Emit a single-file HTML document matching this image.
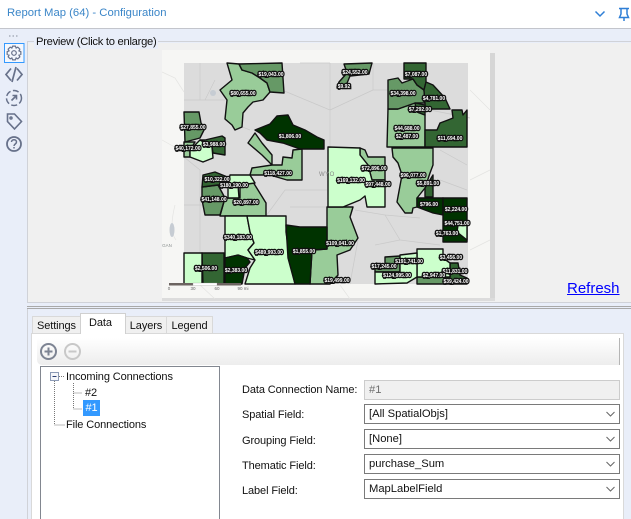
<!DOCTYPE html>
<html style="width:631px;height:519px;overflow:hidden"><head><meta charset="utf-8">
<style>
html,body{margin:0;padding:0}
body{width:631px;height:519px;overflow:hidden;position:relative;background:#e9eef9;font-family:"Liberation Sans",sans-serif;font-size:11px;color:#111}
.a{position:absolute;white-space:nowrap}
.lab{line-height:14px;letter-spacing:-.1px}
.inp{position:absolute;left:364px;width:254px;height:18px;border:1px solid #7a7a7a;background:#fff;line-height:17px;font-size:11.200px}
.inp span{position:absolute;left:4px;top:1px}
.inp svg{position:absolute;right:4px;top:6px}
.tab{position:absolute;top:316px;height:17px;background:#f0f0f0;border:1px solid #d9d9d9;border-bottom:none;box-sizing:border-box;line-height:18px;text-align:center;letter-spacing:-.1px}
</style></head><body>
<div class="a" style="left:0;top:0;width:631px;height:28px;background:#fff;border-bottom:1px solid #c3c5cc"></div>
<div class="a" style="left:7px;top:6px;font-size:11.300px;color:#3b86c8;line-height:15px">Report Map (64) - Configuration</div>
<svg class="a" style="left:590px;top:4px" width="41" height="20" fill="none" stroke="#2f7fd6" stroke-width="1.5"><path d="M5.500 7.500L10 12L14.500 7.500"/><path d="M29 4.500H39M31 5V10L29.500 13.500H38.500L37 10V5M34 13.500V17"/></svg>

<!-- sidebar -->
<svg class="a" style="left:0;top:29px" width="28" height="130" fill="none" stroke="#67718a" stroke-width="1.5">
<path d="M9 7h1.500M12.500 7h1.500M16 7h1.500" stroke="#a8aebb" stroke-width="1.500"/>
<rect x="4.500" y="14.500" width="19.500" height="19" stroke="#3399ff" stroke-width="1" fill="#f4f7fd"/>
<circle cx="14" cy="24" r="2.300" stroke-width="1.200"/>
<path d="M12.540 17.150L15.460 17.150L16.070 19.120L17.810 18.130L19.870 20.190L18.880 21.930L20.850 22.540L20.850 25.460L18.880 26.070L19.870 27.810L17.810 29.870L16.070 28.880L15.460 30.850L12.540 30.850L11.930 28.880L10.190 29.870L8.130 27.810L9.120 26.070L7.150 25.460L7.150 22.540L9.120 21.930L8.130 20.190L10.190 18.130L11.930 19.120Z" stroke-width="1.200" stroke-linejoin="round"/>
<path d="M11 39.500L6 45.500L11 51.500M17 39.500L22 45.500L17 51.500M16 38L12 53" stroke-width="1.700"/>
<circle cx="14" cy="69" r="7.500" stroke-dasharray="6 2.500" stroke-width="1.500"/>
<path d="M11.500 71.500L16.500 66.500M12.500 66.500H16.500V70.500" stroke-width="1.600"/>
<path d="M7.500 85H14.500L21.500 92.500L14.500 100L7.500 92.500Z" stroke-width="1.600"/>
<circle cx="11" cy="89" r="1"/>
<circle cx="14" cy="115" r="7" stroke-width="1.800"/>
<path d="M11.500 113C11.500 110 16.500 110 16.500 113C16.500 115 14 115 14 117" stroke-width="1.500"/>
<path d="M14 118V119.500" stroke-width="1.500"/>
</svg>

<!-- Preview panel -->
<div class="a" style="left:27px;top:41px;width:604px;height:1px;background:#d0d2d8"></div>
<div class="a" style="left:27px;top:41px;width:1px;height:262px;background:#d0d2d8"></div>
<div class="a" style="left:28px;top:43px;width:603px;height:259px;background:#f0f0f0"></div>
<div class="a" style="left:28px;top:302px;width:603px;height:1px;background:#d0d2d8"></div>
<div class="a" style="left:34px;top:35px;background:#e9eef9;padding:0 2px;line-height:14px;font-size:11.200px;letter-spacing:-.27px">Preview (Click to enlarge)</div>

<!-- Map -->
<svg class="a" style="left:0;top:0;filter:blur(.35px)" width="631" height="303">
<rect x="162" y="50" width="328" height="249" fill="#f6f6f4"/>
<rect x="490" y="53" width="5" height="246" fill="#d6d6d6"/>
<rect x="162" y="298" width="333" height="3" fill="#dcdcdc"/>
<g fill="none" stroke="#e4e4e2" stroke-width=".7"><path d="M162 72L175 78L184 92M162 140L180 150M470 90L490 110M470 180L490 170M470 250L490 240M200 285L215 299M340 285L350 299M175 205C170 225 172 235 176 240"/></g>
<ellipse cx="172" cy="230" rx="2.500" ry="7" fill="#c6ccd3"/>
<rect x="184" y="63" width="284" height="221" fill="#dcdcdc"/>
<g fill="none" stroke="#c9c9c9" stroke-width=".7">
<path d="M184 100H225M200 63V100M282 90L330 110V147M330 63V110M373 63V90H388M373 90L330 110M184 157L200 170V253M225 120L250 130M266 216L285 190L327 190M327 207H290M355 210L385 215L400 240L375 245M358 240L350 284M400 240L440 245M385 215L420 218M430 110L470 118M440 150L467 165M440 180L467 190M205 100L215 80M300 63L330 63M184 205H202"/>
</g>
<circle cx="213" cy="93" r="3" fill="#c6ccd3"/>
<g stroke="#111" stroke-width="1.400" stroke-linejoin="round">
<g fill="#99cc99">
<polygon points="227,63 239,64 242,70 252,73 260,78 267,83 270,92 263,100 253,102 248,107 243,113 242,127 235,130 232,125 225,119 227,100 220,90 232,80"/>
<polygon points="248,143 255,133 262,143 272,155 272,165 282,165 283,157 292,158 293,150 302,149 302,180 287,180 270,175 250,175 252,168 272,165 262,155"/>
<polygon points="388,109 398,109 415,103 417,112 425,115 425,147 387,147"/>
<polygon points="392,148 433,148 433,165 430,173 425,188 417,198 417,207 413,208 412,213 405,213 397,202 402,175 398,163 393,157"/>
<polygon points="360,148 365,150 368,157 385,157 385,180 372,180 368,165 360,155"/>
<polygon points="327,207 353,207 350,217 358,238 350,250 337,255 338,275 330,284 310,284 312,250 327,249"/>
<polygon points="225,198 240,198 240,185 253,182 266,203 266,216 220,216"/>
<polygon points="184,142 195,142 190,150 190,157 184,157"/>
</g>
<g fill="#669966">
<polygon points="239,64 282,63 284,93 270,92 267,83 260,78 252,73 242,70"/>
<polygon points="184,112 199,112 201,123 205,128 200,138 185,142"/>
<polygon points="344,64 372,63 369,74 350,76 345,88 337,88 339,82 347,73"/>
<polygon points="388,80 398,78 402,83 413,79 417,85 424,90 425,103 415,103 398,109 388,109"/>
<polygon points="202,187 218,185 225,198 220,215 205,215 202,200"/>
<polygon points="417,277 445,277 445,284 417,284"/>
<polygon points="385,257 400,256 400,272 375,272 375,265 385,265"/>
</g>
<g fill="#336633">
<polygon points="404,63 426,63 426,82 424,90 417,85 413,79 404,79"/>
<polygon points="426,82 433,85 445,98 450,109 425,109 425,103 424,90"/>
<polygon points="415,103 425,105 425,115 417,112"/>
<polygon points="425,130 437,130 440,123 448,120 453,118 452,110 462,110 463,115 467,110 467,147 425,147"/>
<polygon points="205,140 222,136 225,138 225,155 213,153 212,147 200,140"/>
<polygon points="202,253 224,253 224,284 203,284"/>
<polygon points="203,175 215,172 230,178 228,185 218,185 202,187"/>
<polygon points="425,188 433,175 433,197 425,197"/>
<polygon points="450,263 458,263 460,275 467,278 467,284 445,284 445,277 450,277"/>
</g>
<g fill="#ccffcc">
<polygon points="190,150 200,140 212,147 213,158 203,162 190,157"/>
<polygon points="328,147 360,148 360,155 368,165 372,180 385,180 385,207 367,207 365,196 360,200 343,207 328,207"/>
<polygon points="225,216 247,216 250,232 254,243 248,250 255,260 247,258 238,255 225,258"/>
<polygon points="247,216 286,216 286,232 290,260 295,284 245,284 250,268 255,260 248,250 254,243 250,232"/>
<polygon points="184,253 202,253 202,284 184,284"/>
<polygon points="417,249 443,249 443,258 450,263 450,277 417,277"/>
<polygon points="375,272 400,272 400,262 417,262 417,277 407,283 375,284"/>
<polygon points="400,255 417,253 417,262 400,262"/>
<polygon points="228,185 238,185 239,198 228,198"/>
<polygon points="230,175 250,175 255,183 240,185 228,185"/>
</g>
<g fill="#003300">
<polygon points="255,130 270,124 277,116 288,115 293,125 305,130 317,137 324,140 324,149 300,149 283,143 267,140 260,133"/>
<polygon points="286,225 300,227 327,227 327,249 312,250 310,284 295,284 288,258"/>
<polygon points="225,258 238,255 247,258 250,262 245,268 242,284 225,284"/>
<polygon points="417,198 443,198 443,215 433,213 417,207"/>
<polygon points="443,198 467,198 467,242 443,242"/>
</g>
<polygon points="458,225 467,225 467,240 457,232" fill="#ccffcc"/>
</g>
<rect x="169" y="283" width="24" height="2.500" fill="#6c6461"/><rect x="193" y="283" width="24" height="2.500" fill="#fff" stroke="#999" stroke-width=".3"/><rect x="217" y="283" width="24" height="2.500" fill="#6c6461"/>
<g font-family="Liberation Sans" font-size="4.500" fill="#666" text-anchor="middle"><text x="169" y="290">0</text><text x="193" y="290">30</text><text x="217" y="290">60</text><text x="243" y="290">90 mi</text></g>
<text x="167" y="247" font-size="4.500" fill="#8a9090" text-anchor="middle" font-family="Liberation Sans">GAN</text>
<text x="319" y="176" font-size="6" fill="#888" font-family="Liberation Sans" letter-spacing=".5">WYO</text>
<g font-family="Liberation Sans" font-size="5" font-weight="700" fill="#fff" stroke="#111" stroke-width="2.600" paint-order="stroke" text-anchor="middle" stroke-linejoin="miter">
<text x="271" y="76">$19,043.00</text><text x="243" y="95">$80,655.00</text><text x="355" y="74">$24,552.00</text><text x="344" y="88">$9.92</text>
<text x="416" y="76">$7,087.00</text><text x="403" y="95">$34,398.00</text><text x="434" y="100">$4,781.00</text><text x="420" y="111">$7,292.00</text>
<text x="407" y="130">$44,688.00</text><text x="407" y="138">$2,487.00</text><text x="450" y="140">$11,694.00</text><text x="193" y="129">$27,855.00</text>
<text x="290" y="138">$1,806.00</text><text x="214" y="146">$3,988.00</text><text x="188" y="150">$40,172.00</text><text x="278" y="175">$118,427.00</text>
<text x="374" y="170">$72,896.00</text><text x="413" y="177">$96,077.00</text><text x="351" y="182">$169,132.00</text><text x="378" y="186">$97,448.00</text>
<text x="428" y="185">$5,891.00</text><text x="217" y="181">$10,322.00</text><text x="234" y="187">$180,190.00</text><text x="214" y="201">$41,148.00</text>
<text x="246" y="204">$20,897.00</text><text x="238" y="239">$340,183.00</text><text x="269" y="254">$489,993.00</text><text x="304" y="253">$1,855.00</text>
<text x="206" y="270">$2,506.00</text><text x="236" y="272">$2,383.00</text><text x="429" y="206">$796.00</text><text x="456" y="211">$2,224.00</text>
<text x="457" y="225">$44,751.00</text><text x="447" y="235">$1,763.00</text><text x="340" y="245">$109,041.00</text><text x="451" y="259">$3,456.00</text>
<text x="409" y="263">$191,741.00</text><text x="384" y="268">$17,245.00</text><text x="455" y="273">$11,831.00</text><text x="397" y="277">$124,995.00</text>
<text x="434" y="277">$2,947.00</text><text x="456" y="283">$39,424.00</text><text x="337" y="282">$19,499.00</text>
</g>
</svg>

<div class="a" style="left:567px;top:280px;font-size:15px;line-height:18px;color:#0000ff;text-decoration:underline">Refresh</div>

<!-- splitter -->
<div class="a" style="left:27px;top:306px;width:604px;height:1px;background:#a9a9a9"></div>
<div class="a" style="left:27px;top:308px;width:604px;height:1px;background:#a9a9a9"></div>
<div class="a" style="left:27px;top:309px;width:1px;height:210px;background:#d0d2d8"></div>

<!-- tab body -->
<div class="a" style="left:31px;top:333px;width:593px;height:186px;background:#fff;border:1px solid #d9d9d9;border-bottom:none;box-sizing:border-box"></div>
<div class="tab" style="left:32px;width:49px">Settings</div>
<div class="tab" style="left:125px;width:42px">Layers</div>
<div class="tab" style="left:166px;width:47px">Legend</div>
<div class="tab" style="left:80px;top:313px;width:46px;height:21px;background:#fff;line-height:19px;border-color:#d0d0d0;z-index:2;text-align:left;padding-left:8px">Data</div>
<div class="a" style="left:81px;top:333px;width:44px;height:2px;background:#fff;z-index:2"></div>

<!-- toolbar -->
<div class="a" style="left:37px;top:338px;width:583px;height:27px;background:linear-gradient(#fff,#ededed);border-radius:0 0 0 5px;border-right:1px solid #b5b5b5;box-sizing:border-box"></div>
<svg class="a" style="left:38px;top:341px" width="50" height="22" fill="none">
<circle cx="10.500" cy="10.500" r="7.500" stroke="#7d8493" stroke-width="2"/>
<path d="M6.500 10.500H14.500M10.500 6.500V14.500" stroke="#7d8493" stroke-width="2"/>
<circle cx="34.500" cy="10.500" r="7.500" stroke="#c8c8c8" stroke-width="2"/>
<path d="M30.500 10.500H38.500" stroke="#c8c8c8" stroke-width="2"/>
</svg>

<!-- tree -->
<div class="a" style="left:40px;top:366px;width:180px;height:153px;border:1px solid #828790;border-bottom:none;box-sizing:border-box;background:#fff"></div>
<svg class="a" style="left:40px;top:366px" width="70" height="70" fill="none" shape-rendering="crispEdges">
<rect x="10.500" y="6.500" width="8" height="8" stroke="#8b9ab5" fill="#f4f6fa"/>
<path d="M12.500 10.500H16.500" stroke="#2b3f73"/>
<path d="M14.500 15V59H25M19 10.500H25M33.500 17V43H42M33.500 27H42" stroke="#777" stroke-dasharray="1 1"/>
</svg>
<div class="a lab" style="left:66px;top:370px">Incoming Connections</div>
<div class="a lab" style="left:85px;top:386px">#2</div>
<div class="a lab" style="left:83px;top:400px;width:17px;height:16px;background:#3399ff;color:#fff;line-height:17px;text-align:center">#1</div>
<div class="a lab" style="left:66px;top:418px">File Connections</div>

<!-- form -->
<div class="a lab" style="left:242px;top:383px">Data Connection Name:</div>
<div class="a lab" style="left:242px;top:408px">Spatial Field:</div>
<div class="a lab" style="left:242px;top:434px">Grouping Field:</div>
<div class="a lab" style="left:242px;top:459px">Thematic Field:</div>
<div class="a lab" style="left:242px;top:484px">Label Field:</div>
<div class="inp" style="top:380px;background:#f0f0f0;border-color:#ccc;color:#6d6d6d"><span>#1</span></div>
<div class="inp" style="top:404px"><span>[All SpatialObjs]</span><svg width="9" height="6" fill="none" stroke="#666"><path d="M.5 1L4.500 5L8.500 1"/></svg></div>
<div class="inp" style="top:429px"><span>[None]</span><svg width="9" height="6" fill="none" stroke="#666"><path d="M.5 1L4.500 5L8.500 1"/></svg></div>
<div class="inp" style="top:454px"><span>purchase_Sum</span><svg width="9" height="6" fill="none" stroke="#666"><path d="M.5 1L4.500 5L8.500 1"/></svg></div>
<div class="inp" style="top:479px"><span>MapLabelField</span><svg width="9" height="6" fill="none" stroke="#666"><path d="M.5 1L4.500 5L8.500 1"/></svg></div>
</body></html>
